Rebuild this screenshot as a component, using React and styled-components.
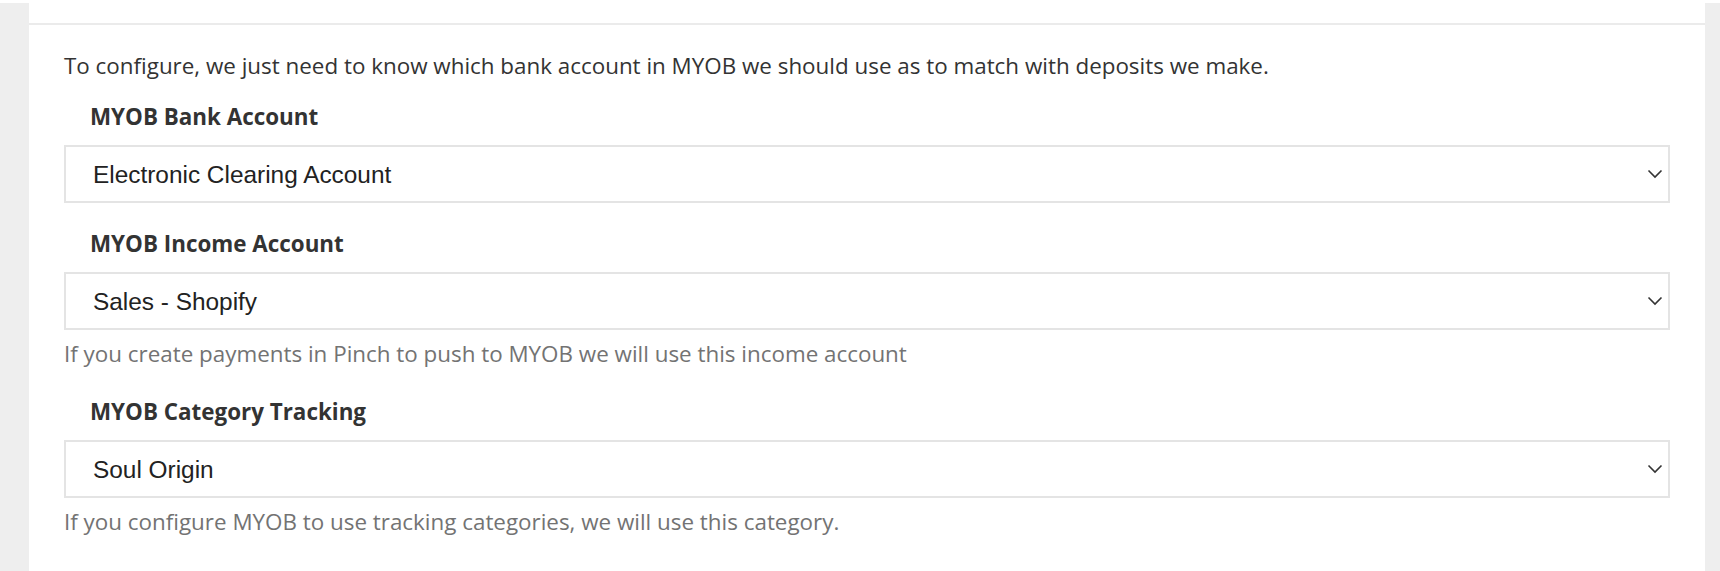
import React from "react";
import styled, { createGlobalStyle } from "styled-components";

const GlobalStyle = createGlobalStyle`
  html, body {
    margin: 0;
    padding: 0;
    background: #ffffff;
    overflow: hidden;
  }
  body {
    font-family: "Open Sans", "Liberation Sans", sans-serif;
    color: #333333;
  }
`;

const Page = styled.div`
  padding-top: 3px;
  background: #ffffff;
`;

const Backdrop = styled.div`
  display: flex;
  background: #eeeeee;
  padding: 0 15px 0 29px;
  min-height: 568px;
`;

const Card = styled.div`
  flex: 1;
  display: flex;
  flex-direction: column;
  background: #ffffff;
`;

const CardHeader = styled.div`
  flex-shrink: 0;
  height: 20px;
  border-bottom: 2px solid #ebebeb;
`;

const CardBody = styled.div`
  padding: 24px 35px 0 35px;
`;

const Intro = styled.p`
  margin: 0 0 17px 0;
  font-size: 22.4px;
  line-height: 34px;
  color: #333333;
`;

const FormGroup = styled.div`
  display: flex;
  flex-direction: column;
  margin-bottom: 24px;
`;

const Label = styled.label`
  padding-left: 26px;
  margin-bottom: 11px;
  font-size: 22.4px;
  line-height: 34px;
  font-weight: 700;
  color: #333333;
`;

const SelectBox = styled.div`
  position: relative;
  display: flex;
  align-items: center;
  height: 58px;
  box-sizing: border-box;
  border: 2px solid #e4e4e4;
  padding: 2px 40px 0 27px;
  font-family: "Liberation Sans", Arial, sans-serif;
  font-size: 24.4px;
  color: #222222;
`;

const Chevron = styled.svg`
  position: absolute;
  right: 5px;
  top: 50%;
  transform: translateY(-50%);
  width: 16px;
  height: 10px;
`;

const Help = styled.p`
  margin: 7px 0 0 0;
  font-size: 22.4px;
  line-height: 34px;
  color: #737373;
`;

function Select({ value }) {
  return (
    <SelectBox>
      {value}
      <Chevron viewBox="0 0 16 10" fill="none">
        <path d="M1.5 1.5 L8 8 L14.5 1.5" stroke="#333" strokeWidth="1.6" />
      </Chevron>
    </SelectBox>
  );
}

const fields = [
  { label: "MYOB Bank Account", value: "Electronic Clearing Account" },
  {
    label: "MYOB Income Account",
    value: "Sales - Shopify",
    help: "If you create payments in Pinch to push to MYOB we will use this income account",
  },
  {
    label: "MYOB Category Tracking",
    value: "Soul Origin",
    help: "If you configure MYOB to use tracking categories, we will use this category.",
  },
];

export default function App() {
  return (
    <>
      <GlobalStyle />
      <Page>
        <Backdrop>
          <Card>
            <CardHeader />
            <CardBody>
              <Intro>
                To configure, we just need to know which bank account in MYOB we should use as to match with deposits we make.
              </Intro>
              {fields.map((f) => (
                <FormGroup key={f.label}>
                  <Label>{f.label}</Label>
                  <Select value={f.value} />
                  {f.help && <Help>{f.help}</Help>}
                </FormGroup>
              ))}
            </CardBody>
          </Card>
        </Backdrop>
      </Page>
    </>
  );
}
